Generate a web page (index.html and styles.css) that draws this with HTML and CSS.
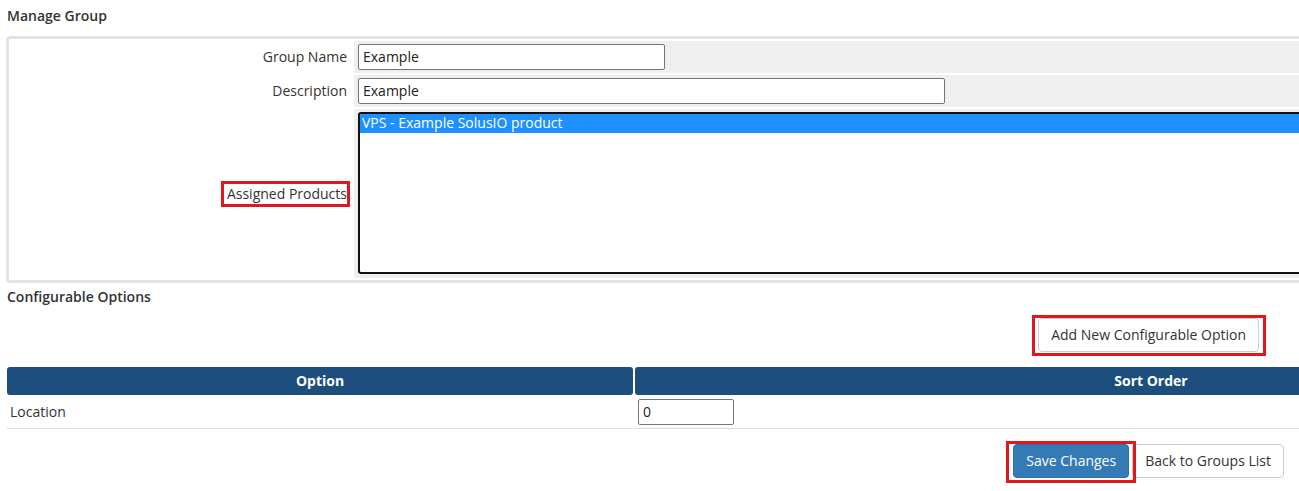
FILE: index.html
```html
<!DOCTYPE html>
<html>
<head>
<meta charset="utf-8">
<title>Manage Group</title>
<link rel="stylesheet" href="styles.css">
</head>
<body>
<div class="page">
  <h2 class="title">Manage Group</h2>
  <div class="panel">
    <div class="form-grid">
      <div class="label"><span class="lbl">Group Name</span></div>
      <div class="field"><input class="input input-name" type="text" value="Example"></div>
      <div class="label"><span class="lbl">Description</span></div>
      <div class="field"><input class="input input-desc" type="text" value="Example"></div>
      <div class="label"><span class="lbl lbl-mark">Assigned Products</span></div>
      <div class="field field-tall">
        <div class="listbox">
          <div class="opt opt-selected">VPS - Example SolusIO product</div>
        </div>
      </div>
    </div>
  </div>
  <h2 class="title title-sub">Configurable Options</h2>
  <div class="add-row">
    <span class="mark mark-add"><button class="btn" type="button">Add New Configurable Option</button></span>
  </div>
  <div class="opt-table">
    <div class="th">Option</div>
    <div class="th">Sort Order</div>
    <div class="td">Location</div>
    <div class="td"><input class="input input-sort" type="text" value="0"></div>
  </div>
  <div class="actions">
    <span class="mark mark-save"><button class="btn btn-primary" type="button">Save Changes</button></span>
    <button class="btn btn-back" type="button">Back to Groups List</button>
  </div>
</div>
</body>
</html>
```
FILE: styles.css
```css
html, body {
  margin: 0;
  padding: 0;
  overflow: hidden;
  background: #ffffff;
}

body {
  font-family: "Open Sans", "Liberation Sans", sans-serif;
  font-size: 14px;
  line-height: 20px;
  color: #333333;
}

.page {
  width: 1299px;
}

.title {
  margin: 0;
  padding: 6px 0 0 7px;
  margin-bottom: 10px;
  font-size: 14px;
  line-height: 20px;
  font-weight: 600;
  color: #333333;
}

.title-sub {
  padding-top: 0;
  margin-top: 4px;
  margin-bottom: 0;
}

.panel {
  margin-left: 6px;
  width: 1700px;
  border: 3px solid #dfe5e7;
  border-radius: 4px;
  background: #ffffff;
}

.form-grid {
  display: grid;
  grid-template-columns: 341px 1fr;
  grid-template-rows: 32px 32px 169px;
  gap: 2px;
  padding: 2px;
}

.label {
  display: flex;
  align-items: center;
  justify-content: flex-end;
  padding-right: 2px;
  background: #ffffff;
}

.lbl {
  display: inline-block;
  border: 3px solid transparent;
  padding: 0 0 0 3px;
  line-height: 20px;
  color: #333333;
}

.lbl-mark {
  border-color: #e2161d;
}

.field {
  background: #efefef;
  padding: 3px 4px;
  display: flex;
  align-items: flex-start;
}

.field-tall {
  padding: 3px 0 4px 4px;
}

.input {
  box-sizing: border-box;
  height: 26px;
  margin: 0;
  padding: 0 4px 2px;
  border: 1px solid #767676;
  border-radius: 2px;
  font-family: "Open Sans", "Liberation Sans", sans-serif;
  font-size: 14px;
  color: #222222;
  background: #ffffff;
}

.input-name {
  width: 307px;
}

.input-desc {
  width: 587px;
}

.input-sort {
  width: 96px;
}

.listbox {
  box-sizing: border-box;
  width: 100%;
  height: 162px;
  border: 2px solid #101010;
  border-radius: 3px;
  background: #ffffff;
  overflow: hidden;
}

.opt {
  line-height: 18px;
  height: 19px;
  padding-left: 2px;
  white-space: nowrap;
}

.opt-selected {
  background: #1e90ff;
  color: #ffffff;
}

.add-row {
  display: flex;
  justify-content: flex-end;
  padding-right: 33px;
  margin-top: 8px;
}

.mark {
  display: inline-flex;
  border: 3px solid #e2161d;
  position: relative;
  z-index: 1;
}

.mark-add {
  padding: 0 4px 1px 3px;
}

.mark-save {
  padding: 0 4px 2px 4px;
}

.btn {
  box-sizing: border-box;
  height: 34px;
  margin: 0;
  padding: 6px 12px;
  border: 1px solid #cccccc;
  border-radius: 4px;
  background: #ffffff;
  color: #333333;
  font-family: "Open Sans", "Liberation Sans", sans-serif;
  font-size: 14px;
  line-height: 20px;
  white-space: nowrap;
}

.btn-primary {
  background: #337ab7;
  border-color: #2e6da4;
  color: #ffffff;
}

.btn-back {
  margin-top: 3px;
  margin-left: -4px;
}

.opt-table {
  display: grid;
  grid-template-columns: 626px 1032px;
  column-gap: 2px;
  row-gap: 2px;
  margin: 11px 0 0 7px;
  width: 1660px;
}

.th {
  height: 28px;
  line-height: 28px;
  text-align: center;
  background: #1c4e7e;
  color: #ffffff;
  font-weight: 700;
  border-radius: 3px;
}

.td {
  display: flex;
  align-items: center;
  box-sizing: border-box;
  padding: 2px 3px 3px;
  border-bottom: 1px solid #dddddd;
  height: 32px;
}

.actions {
  display: flex;
  align-items: flex-start;
  justify-content: flex-end;
  padding-right: 15px;
  margin-top: 12px;
}
```
